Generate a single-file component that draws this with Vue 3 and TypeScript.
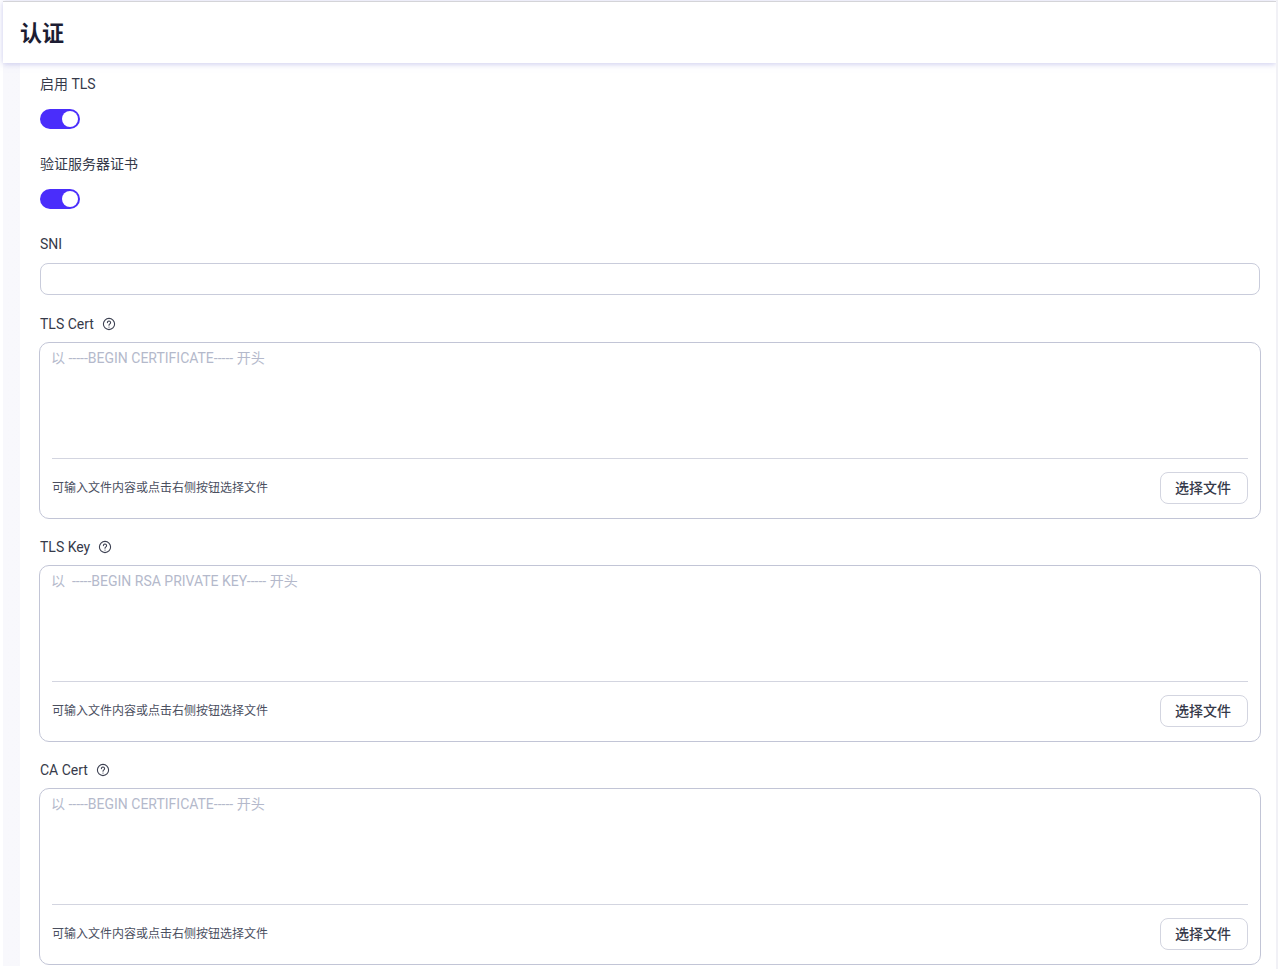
<script setup lang="ts">
interface CertField {
  label: string
  placeholder: string
}

const certFields: CertField[] = [
  { label: 'TLS Cert', placeholder: '以 -----BEGIN CERTIFICATE----- 开头' },
  { label: 'TLS Key', placeholder: '以  -----BEGIN RSA PRIVATE KEY----- 开头' },
  { label: 'CA Cert', placeholder: '以 -----BEGIN CERTIFICATE----- 开头' },
]
</script>

<template>
  <div class="page">
    <header class="header"><h1>认证</h1></header>
    <div class="shell">
      <main class="content">
        <section class="field switch-field">
          <label>启用 TLS</label>
          <span class="switch"><span class="knob"></span></span>
        </section>
        <section class="field switch-field">
          <label>验证服务器证书</label>
          <span class="switch"><span class="knob"></span></span>
        </section>
        <section class="field sni-field">
          <label>SNI</label>
          <input class="input" type="text" />
        </section>
        <section v-for="f in certFields" :key="f.label" class="field cert-field">
          <label>
            {{ f.label }}
            <svg class="help" viewBox="0 0 14 14" width="14" height="14" fill="none" stroke="#3d4152" stroke-width="1.1" stroke-linecap="round">
              <circle cx="7" cy="7" r="5.6" />
              <path d="M5.4 5.6a1.6 1.6 0 1 1 2.5 1.3c-.6.4-.9.7-.9 1.3" />
              <path d="M7 10v.1" />
            </svg>
          </label>
          <div class="cert-box">
            <textarea class="cert-text" :placeholder="f.placeholder"></textarea>
            <div class="cert-foot">
              <span class="hint">可输入文件内容或点击右侧按钮选择文件</span>
              <button class="pick" type="button">选择文件</button>
            </div>
          </div>
        </section>
      </main>
    </div>
  </div>
</template>

<style>
html, body {
  margin: 0;
  background: #fff;
  overflow: hidden;
}
</style>

<style scoped>
.page {
  box-sizing: border-box;
  height: 969px;
  overflow: hidden;
  padding: 1px 0 0 3px;
  border-right: 2px solid #f1f1f6;
  background: #fff;
  font-family: Roboto, "Noto Sans CJK SC", sans-serif;
  color: #363a4a;
  font-size: 14px;
}
.header {
  box-sizing: border-box;
  height: 62px;
  border-top: 1px solid #d4d4d8;
  background: #fff;
  display: flex;
  align-items: center;
  padding: 2px 0 0 17px;
  position: relative;
  z-index: 1;
  box-shadow: 0 1px 6px rgba(180, 180, 230, 0.7);
}
.header h1 {
  margin: 0;
  font-size: 22px;
  line-height: 30px;
  font-weight: 700;
  color: #1c1d33;
}
.shell {
  background: linear-gradient(90deg, #f8f8fc, #ecedf5);
  padding-left: 17px;
  height: 903px;
}
.content {
  box-sizing: border-box;
  height: 100%;
  background: #fff;
  padding: 11px 16px 0 20px;
}
.field label {
  display: flex;
  align-items: center;
  gap: 8px;
  height: 20px;
  line-height: 20px;
  font-size: 14px;
  color: #363a4a;
}
.switch-field {
  height: 80px;
}
.switch {
  display: block;
  box-sizing: border-box;
  width: 40px;
  height: 20px;
  margin-top: 15px;
  border-radius: 10px;
  background: #4a2dfb;
  position: relative;
}
.knob {
  position: absolute;
  top: 2px;
  right: 2px;
  width: 16px;
  height: 16px;
  border-radius: 50%;
  background: #fff;
}
.sni-field {
  height: 80px;
}
.input {
  display: block;
  box-sizing: border-box;
  width: 1220px;
  height: 32px;
  margin-top: 9px;
  border: 1px solid #c9ccdb;
  border-radius: 8px;
  outline: none;
  background: #fff;
}
.cert-field {
  height: 223px;
}
.help {
  flex: none;
}
.cert-box {
  box-sizing: border-box;
  width: 1222px;
  height: 177px;
  margin: 8px 0 0 -1px;
  padding: 0 12px;
  border: 1px solid #c2c5d6;
  border-radius: 10px;
  background: #fff;
}
.cert-text {
  display: block;
  box-sizing: border-box;
  width: 100%;
  height: 116px;
  padding: 5px 0 0;
  border: 0;
  border-bottom: 1px solid #d3d5e0;
  outline: none;
  resize: none;
  background: transparent;
  font: 14px/20px Roboto, "Noto Sans CJK SC", sans-serif;
  text-indent: -1px;
}
.cert-text::placeholder {
  color: #b4b9cb;
  opacity: 1;
}
.cert-foot {
  display: flex;
  align-items: center;
  justify-content: space-between;
  padding-top: 13px;
}
.hint {
  font-size: 12px;
  line-height: 16px;
  color: #4b4f5f;
}
.pick {
  box-sizing: border-box;
  width: 88px;
  height: 32px;
  padding: 0 2px 0 0;
  border: 1px solid #d3d5e0;
  border-radius: 8px;
  background: #fff;
  font: 500 14px/20px Roboto, "Noto Sans CJK SC", sans-serif;
  color: #363a4a;
}
</style>
